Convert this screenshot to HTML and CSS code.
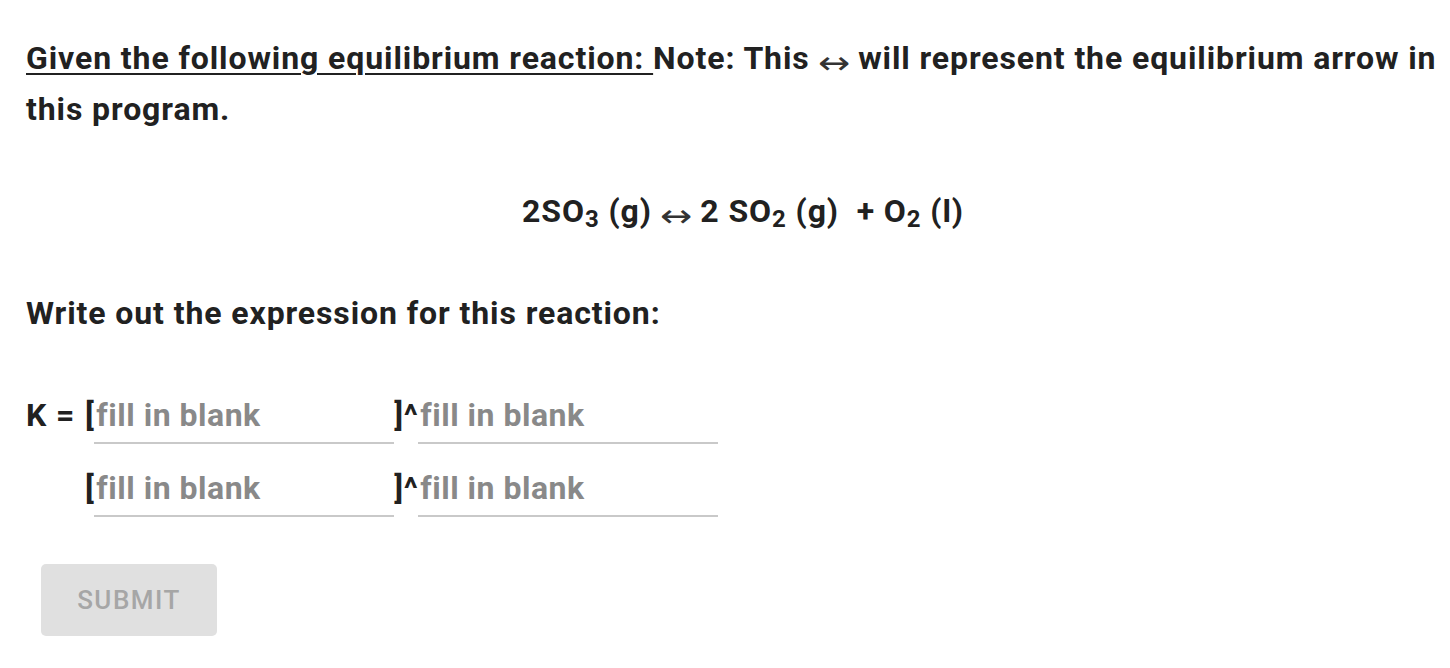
FILE: index.html
```html
<!DOCTYPE html>
<html>
<head>
<meta charset="utf-8">
<link rel="stylesheet" href="styles.css">
</head>
<body>
<div class="page">
  <p class="intro"><span class="u">Given the following equilibrium reaction: </span>Note: This <span class="arrow">&harr;</span> will represent the equilibrium arrow in this program.</p>
  <p class="eq">2SO<sub>3</sub> (g) <span class="arrow">&harr;</span> 2 SO<sub>2</sub> (g) &nbsp;+ O<sub>2</sub> (l)</p>
  <p class="write">Write out the expression for this reaction:</p>
  <div class="row first">
    <span class="lbl">K = </span><span class="br">[</span><input class="blank" placeholder="fill in blank"><span class="br">]^</span><input class="blank" placeholder="fill in blank">
  </div>
  <div class="row">
    <span class="lbl"></span><span class="br">[</span><input class="blank" placeholder="fill in blank"><span class="br">]^</span><input class="blank" placeholder="fill in blank">
  </div>
  <button class="submit">SUBMIT</button>
</div>
</body>
</html>
```
FILE: styles.css
```css
html, body {
  margin: 0;
  padding: 0;
  background: #ffffff;
}
.page {
  padding: 33px 0 0 26px;
  font-family: Roboto, "Liberation Sans", sans-serif;
  font-weight: 700;
  font-size: 32px;
  line-height: 51px;
  letter-spacing: 0.9px;
  color: #212121;
}
p { margin: 0; }
.u { text-decoration: underline; text-underline-offset: 4px; text-decoration-thickness: 2px; }
.arrow {
  display: inline-block;
  font-family: "DejaVu Sans", sans-serif;
  font-weight: 400;
  font-size: 32px;
  line-height: 32px;
  letter-spacing: 0;
  vertical-align: -5px;
  transform: scaleX(1.2);
  margin: 0 2px;
  color: #333;
}
.eq {
  margin-top: 51px;
  text-align: center;
  padding-left: 10px;
}
sub {
  font-size: 24px;
  line-height: 0;
  vertical-align: -5px;
}
.write { margin-top: 51px; }
.row {
  display: flex;
  align-items: baseline;
  height: 51px;
  margin-top: 22px;
}
.row.first { margin-top: 51px; }
.lbl { display: inline-block; width: 59px; white-space: pre; }
.br { white-space: pre; letter-spacing: 0.5px; }
.blank {
  font-family: Roboto, "Liberation Sans", sans-serif;
  font-weight: 700;
  font-size: 32px;
  letter-spacing: 0.5px;
  color: #212121;
  width: 300px;
  border: none;
  border-bottom: 2px solid #c9c9c9;
  padding: 0 0 7px 2px;
  margin: 0;
  outline: none;
  background: transparent;
  box-sizing: border-box;
  height: 49px;
}
.blank::placeholder { color: #898989; opacity: 1; }
.submit {
  display: block;
  margin: 50px 0 0 15px;
  width: 176px;
  height: 72px;
  background: #e0e0e0;
  border: none;
  border-radius: 5px;
  font-family: Roboto, "Liberation Sans", sans-serif;
  font-weight: 500;
  font-size: 26px;
  color: #a6a6a6;
  letter-spacing: 1.5px;
  padding: 0;
}
```
